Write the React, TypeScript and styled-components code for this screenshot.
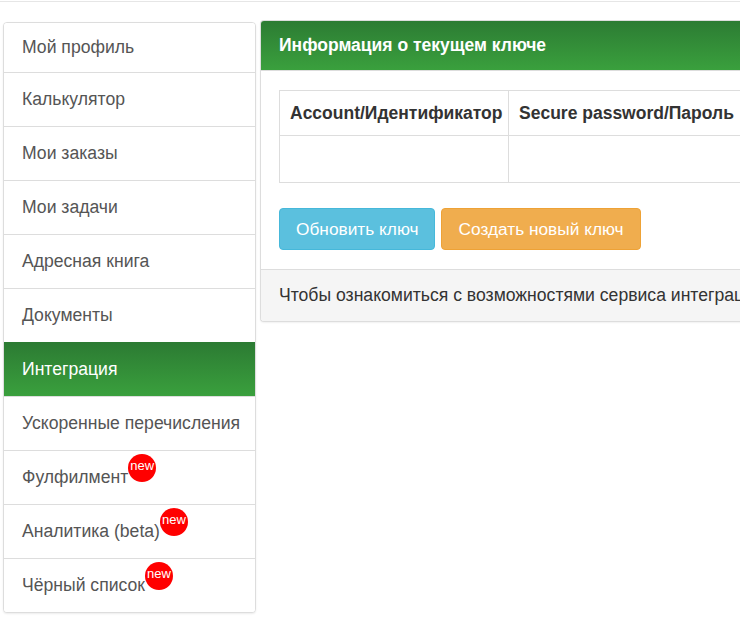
import React from "react";
import styled, { createGlobalStyle } from "styled-components";

const GlobalStyle = createGlobalStyle`
  html, body {
    margin: 0;
    padding: 0;
    background: #fff;
    font-family: "Liberation Sans", Arial, sans-serif;
    color: #333;
  }
`;

const menu = [
  { title: "Мой профиль" },
  { title: "Калькулятор" },
  { title: "Мои заказы" },
  { title: "Мои задачи" },
  { title: "Адресная книга" },
  { title: "Документы" },
  { title: "Интеграция", active: true },
  { title: "Ускоренные перечисления" },
  { title: "Фулфилмент", isNew: true },
  { title: "Аналитика (beta)", isNew: true },
  { title: "Чёрный список", isNew: true },
];

const App = () => {
  return (
    <Page>
      <GlobalStyle />
      <TopRule />
      <Layout>
        <Sidebar>
          {menu.map((it, idx) => (
            <MenuItem key={idx} $active={!!it.active} $first={idx === 0}>
              <span>{it.title}</span>
              {it.isNew && <NewBadge>new</NewBadge>}
            </MenuItem>
          ))}
        </Sidebar>

        <Panel>
          <PanelHeading>Информация о текущем ключе</PanelHeading>
          <PanelBody>
            <KeyTable>
              <thead>
                <tr>
                  <HeadCell $width={229}>Account/Идентификатор</HeadCell>
                  <HeadCell>Secure password/Пароль</HeadCell>
                </tr>
              </thead>
              <tbody>
                <tr>
                  <BodyCell />
                  <BodyCell />
                </tr>
              </tbody>
            </KeyTable>
            <ButtonRow>
              <ActionButton $kind="info">Обновить ключ</ActionButton>
              <ActionButton $kind="warning">Создать новый ключ</ActionButton>
            </ButtonRow>
          </PanelBody>
          <PanelFooter>
            Чтобы ознакомиться с возможностями сервиса интеграции, перейдите в раздел документации
          </PanelFooter>
        </Panel>
      </Layout>
    </Page>
  );
};

const Page = styled.div`
  width: 740px;
  height: 628px;
  overflow: hidden;
  padding-top: 1px;
  box-sizing: border-box;
`;

const TopRule = styled.div`
  height: 1px;
  background: #e6e6e6;
`;

const Layout = styled.div`
  display: flex;
  align-items: flex-start;
  gap: 4px;
  padding: 18px 0 0 3px;
`;

const Sidebar = styled.div`
  flex: 0 0 253px;
  width: 253px;
  margin-top: 2px;
  border: 1px solid #ddd;
  border-radius: 4px;
  box-sizing: border-box;
  box-shadow: 0 1px 2px rgba(0, 0, 0, 0.08);
  overflow: hidden;
  background: #fff;
`;

const MenuItem = styled.div<{ $active: boolean; $first: boolean }>`
  display: flex;
  align-items: center;
  height: ${(p) => (p.$first ? "49px" : "53px")};
  padding: 0 18px;
  border-top: ${(p) => (p.$first ? "none" : "1px solid #ddd")};
  font-size: 17.6px;
  color: ${(p) => (p.$active ? "#fff" : "#555")};
  background: ${(p) =>
    p.$active ? "linear-gradient(to bottom, #2c7b33 0%, #3aa03d 100%)" : "#fff"};
  border-top-color: ${(p) => (p.$active ? "#2c7b33" : "#ddd")};
  white-space: nowrap;
`;

const NewBadge = styled.span`
  align-self: flex-start;
  margin-top: 3px;
  width: 28px;
  height: 28px;
  border-radius: 50%;
  background: #f00;
  color: #fff;
  font-size: 13px;
  line-height: 24px;
  text-align: center;
  flex-shrink: 0;
`;

const Panel = styled.div`
  flex: 0 0 520px;
  border: 1px solid #ddd;
  border-radius: 4px 0 0 4px;
  border-right: none;
  background: #fff;
  box-shadow: 0 1px 2px rgba(0, 0, 0, 0.06);
  overflow: hidden;
`;

const PanelHeading = styled.div`
  height: 50px;
  margin: -1px 0 0 -1px;
  padding: 0 19px;
  display: flex;
  align-items: center;
  background: linear-gradient(to bottom, #2c7b33 0%, #3aa03d 100%);
  color: #fff;
  font-size: 17.5px;
  font-weight: bold;
  white-space: nowrap;
  border-bottom: 1px solid #ddd;
`;

const PanelBody = styled.div`
  padding: 19px 0 19px 18px;
`;

const KeyTable = styled.table`
  border-collapse: collapse;
  table-layout: fixed;
  width: 600px;
  border: 1px solid #ddd;
`;

const HeadCell = styled.th<{ $width?: number }>`
  height: 45px;
  padding: 0 4px 0 10px;
  width: ${(p) => (p.$width ? `${p.$width}px` : "auto")};
  box-sizing: border-box;
  border: 1px solid #ddd;
  text-align: left;
  font-size: 17.5px;
  font-weight: bold;
  color: #333;
  white-space: nowrap;
  overflow: hidden;
`;

const BodyCell = styled.td`
  height: 44px;
  border: 1px solid #ddd;
`;

const ButtonRow = styled.div`
  display: flex;
  gap: 6px;
  margin-top: 25px;
`;

const ActionButton = styled.button<{ $kind: "info" | "warning" }>`
  height: 42px;
  padding: 0 16px;
  border: 1px solid ${(p) => (p.$kind === "info" ? "#46b8da" : "#eea236")};
  border-radius: 4px;
  background: ${(p) => (p.$kind === "info" ? "#5bc0de" : "#f0ad4e")};
  color: #fff;
  font-family: "Liberation Sans", Arial, sans-serif;
  font-size: 17.3px;
  cursor: pointer;
`;

const PanelFooter = styled.div`
  height: 51px;
  padding: 0 18px;
  display: flex;
  align-items: center;
  background: #f5f5f5;
  border-top: 1px solid #ddd;
  font-size: 17.6px;
  color: #333;
  white-space: nowrap;
`;

export default App;
